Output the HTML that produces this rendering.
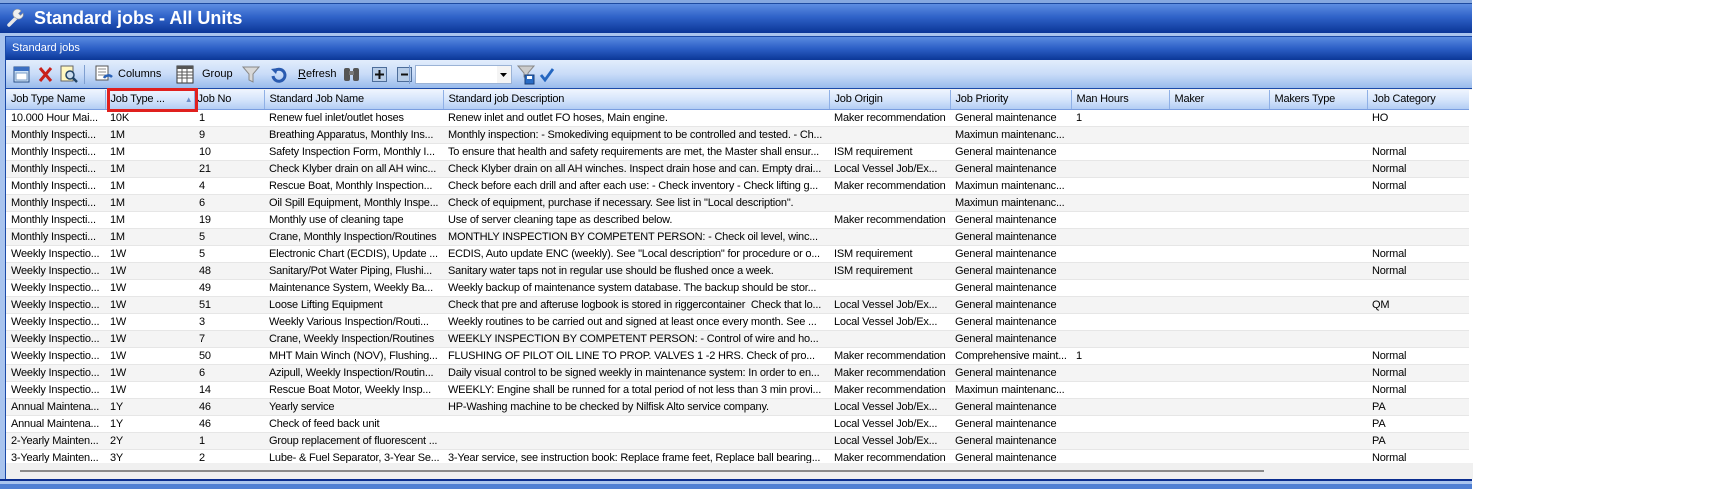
<!DOCTYPE html>
<html><head><meta charset="utf-8"><style>
*{margin:0;padding:0;box-sizing:border-box}
body{width:1720px;height:489px;background:#fff;position:relative;overflow:hidden;font-family:"Liberation Sans",sans-serif}
.a{position:absolute}
#frame{left:0;top:0;width:1472px;height:489px;background:#a9c4ee}
#title{left:0;top:3px;width:1472px;height:30px;background:linear-gradient(#5d8de2,#2f62c8 45%,#0a3596);border-top:1px solid #1d4aa0}
#title span{position:absolute;left:34px;top:4px;color:#fff;font-weight:bold;font-size:18px}
#panel{left:5px;top:36px;width:1467px;height:443px;background:#f0f0f0;border-left:1px solid #1b4aa8;border-top:1px solid #1b4aa8}
#phead{left:0;top:0;width:100%;height:23px;background:linear-gradient(#5a8be0,#2c5fc6 50%,#0b3797)}
#phead span{position:absolute;left:6px;top:5px;color:#fff;font-size:11px}
#tool{left:0;top:23px;width:100%;height:29px;background:linear-gradient(#e2edfc,#c9dcf8 50%,#99bbec);border-bottom:1px solid #1b4aa8}
.tl{position:absolute;top:8px;font-size:11px;color:#000}
#grid{left:0;top:53px;width:1467px;height:373px;background:#fff;overflow:hidden}
table{border-collapse:collapse;table-layout:fixed;width:1463px}
td,th{font-size:11px;white-space:nowrap;overflow:hidden;padding-left:5px;text-align:left;font-weight:normal;height:17px;letter-spacing:-0.2px}
th{height:19px;background:linear-gradient(#eef4fe,#d6e5fb 50%,#b3cdf4);border-bottom:1px solid #7a9ee0;border-left:1px solid #8fb0e6}
th:first-child{border-left:none}
tr:nth-child(odd) td{background:#f4f4f4}
tr:nth-child(even) td{background:#fff}
td{border-bottom:1px solid #e6e6e6}
#hs{left:0;top:426px;width:1467px;height:16px;background:#f0f0f0}
#bot1{left:0;top:479px;width:1472px;height:2px;background:#0a2d8f}
#bot2{left:0;top:481px;width:1472px;height:3px;background:#a9c4ee}
#bot3{left:0;top:484px;width:1472px;height:5px;background:#4f7fd3}
</style></head><body>
<div id="frame" class="a"></div>
<div class="a" style="left:0;top:0;width:1472px;height:3px;background:#86a8e0"></div>
<div id="title" class="a">
<svg class="a" style="left:6px;top:4px" width="20" height="20" viewBox="0 0 20 20"><path d="M3 17 L11 9" stroke="#e8e8e8" stroke-width="3.5" stroke-linecap="round"/><path d="M10 10 A4.5 4.5 0 1 1 15 3 L12.5 5.5 L14.5 7.5 L17 5 A4.5 4.5 0 0 1 10 10" fill="#f0f0f0" stroke="#999" stroke-width="0.6"/></svg>
<span>Standard jobs - All Units</span></div>
<div id="panel" class="a">
<div id="phead" class="a"><span>Standard jobs</span></div>
<div id="tool" class="a">
<svg class="a" style="left:7px;top:6px" width="17" height="17"><rect x="1" y="1" width="15" height="15" fill="#cfe3f7" stroke="#2a4f86"/><rect x="1" y="1" width="15" height="4" fill="#3b6fc2"/><rect x="3" y="7" width="11" height="7" fill="#fff" stroke="#7a9cc8"/></svg>
<svg class="a" style="left:32px;top:6px" width="15" height="17"><path d="M2 2 L13 15 M13 2 L2 15" stroke="#c8201a" stroke-width="3"/></svg>
<svg class="a" style="left:54px;top:5px" width="19" height="18"><rect x="1" y="1" width="12" height="15" fill="#fff7c0" stroke="#666"/><circle cx="10" cy="10" r="4" fill="#cde" stroke="#246" stroke-width="1.5"/><path d="M13 13 L17 17" stroke="#246" stroke-width="2.5"/></svg>
<div class="a" style="left:78px;top:5px;width:1px;height:19px;background:#7f9fd0"></div>
<svg class="a" style="left:89px;top:5px" width="19" height="19"><rect x="1" y="1" width="12" height="14" fill="#fff" stroke="#555"/><path d="M3 4h8M3 7h8M3 10h8" stroke="#888"/><path d="M9 13 A5 5 0 0 1 17 12" stroke="#2a62b8" stroke-width="2.5" fill="none"/></svg>
<span class="tl" style="left:112px">Columns</span>
<svg class="a" style="left:170px;top:5px" width="18" height="19"><rect x="1" y="1" width="16" height="17" fill="#fff" stroke="#333"/><rect x="1" y="1" width="16" height="3" fill="#555"/><path d="M1 7h16M1 10h16M1 13h16M6 4v14M11 4v14" stroke="#555"/></svg>
<span class="tl" style="left:196px">Group</span>
<svg class="a" style="left:236px;top:5px" width="18" height="19"><path d="M1 2 L17 2 L11 9 L11 17 L7 15 L7 9 Z" fill="#d8d8d8" stroke="#888"/></svg>
<svg class="a" style="left:263px;top:6px" width="18" height="17"><path d="M4 10 A6 6 0 1 0 7 4" stroke="#2a5bb0" stroke-width="3" fill="none"/><path d="M2 3 L9 2 L7 8 Z" fill="#2a5bb0"/></svg>
<span class="tl" style="left:292px"><u>R</u>efresh</span>
<svg class="a" style="left:336px;top:6px" width="19" height="17"><rect x="2" y="2" width="6" height="13" rx="2" fill="#555"/><rect x="11" y="2" width="6" height="13" rx="2" fill="#555"/><rect x="7" y="5" width="5" height="4" fill="#777"/></svg>
<svg class="a" style="left:366px;top:7px" width="15" height="15"><rect x="0.5" y="0.5" width="14" height="14" fill="#b8cde8" stroke="#4d6d9a"/><path d="M3 7.5h9M7.5 3v9" stroke="#111" stroke-width="2"/></svg>
<svg class="a" style="left:391px;top:7px" width="15" height="15"><rect x="0.5" y="0.5" width="14" height="14" fill="#b8cde8" stroke="#4d6d9a"/><path d="M4 7.5h7" stroke="#111" stroke-width="2"/></svg>
<svg class="a" style="left:416px;top:5px" width="17" height="19"><rect x="1" y="1" width="10" height="12" fill="#fff8d0" stroke="#555"/><rect x="6" y="6" width="10" height="12" fill="#fff8d0" stroke="#555"/><path d="M8 9h6M8 12h6M8 15h6" stroke="#777"/></svg>
<div class="a" style="left:403px;top:5px;width:1px;height:19px;background:#7f9fd0"></div>
<div class="a" style="left:409px;top:5px;width:97px;height:19px;background:#fff;border:1px solid #9bb3d6"></div>
<div class="a" style="left:491px;top:6px;width:14px;height:17px;background:#f4f4f4"></div>
<svg class="a" style="left:494px;top:13px" width="8" height="5"><path d="M0 0h7L3.5 4z" fill="#000"/></svg>
<svg class="a" style="left:511px;top:4px" width="18" height="21"><path d="M1 2 L17 2 L11 9 L11 15 L7 13 L7 9 Z" fill="#ccc" stroke="#888"/><rect x="8" y="11" width="9" height="9" fill="#2a6cc4" stroke="#1a3f7a"/><rect x="10" y="12" width="5" height="3" fill="#fff"/></svg>
<svg class="a" style="left:533px;top:7px" width="16" height="15"><path d="M2 8 L6 13 L14 2" stroke="#2466c0" stroke-width="2.8" fill="none"/></svg>
</div>
<div id="grid" class="a">
<table>
<colgroup><col style="width:99px"><col style="width:89px"><col style="width:70px"><col style="width:179px"><col style="width:386px"><col style="width:121px"><col style="width:121px"><col style="width:98px"><col style="width:100px"><col style="width:98px"><col style="width:102px"></colgroup>
<thead><tr><th>Job Type Name</th><th>Job Type ...<span style="color:#6f8fc8;font-size:8px;margin-left:20px">▲</span></th><th style="padding-left:3px">Job No</th><th>Standard Job Name</th><th>Standard job Description</th><th>Job Origin</th><th>Job Priority</th><th>Man Hours</th><th>Maker</th><th>Makers Type</th><th>Job Category</th></tr></thead>
<tbody>
<tr style="display:none"><td></td></tr>
<tr><td>10.000 Hour Mai...</td><td>10K</td><td>1</td><td>Renew fuel inlet/outlet hoses</td><td>Renew inlet and outlet FO hoses, Main engine.</td><td>Maker recommendation</td><td>General maintenance</td><td>1</td><td></td><td></td><td>HO</td></tr>
<tr><td>Monthly Inspecti...</td><td>1M</td><td>9</td><td>Breathing Apparatus, Monthly Ins...</td><td>Monthly inspection: - Smokediving equipment to be controlled and tested. - Ch...</td><td></td><td>Maximun maintenanc...</td><td></td><td></td><td></td><td></td></tr>
<tr><td>Monthly Inspecti...</td><td>1M</td><td>10</td><td>Safety Inspection Form, Monthly I...</td><td>To ensure that health and safety requirements are met, the Master shall ensur...</td><td>ISM requirement</td><td>General maintenance</td><td></td><td></td><td></td><td>Normal</td></tr>
<tr><td>Monthly Inspecti...</td><td>1M</td><td>21</td><td>Check Klyber drain on all AH winc...</td><td>Check Klyber drain on all AH winches. Inspect drain hose and can. Empty drai...</td><td>Local Vessel Job/Ex...</td><td>General maintenance</td><td></td><td></td><td></td><td>Normal</td></tr>
<tr><td>Monthly Inspecti...</td><td>1M</td><td>4</td><td>Rescue Boat, Monthly Inspection...</td><td>Check before each drill and after each use: - Check inventory - Check lifting g...</td><td>Maker recommendation</td><td>Maximun maintenanc...</td><td></td><td></td><td></td><td>Normal</td></tr>
<tr><td>Monthly Inspecti...</td><td>1M</td><td>6</td><td>Oil Spill Equipment, Monthly Inspe...</td><td>Check of equipment, purchase if necessary. See list in "Local description".</td><td></td><td>Maximun maintenanc...</td><td></td><td></td><td></td><td></td></tr>
<tr><td>Monthly Inspecti...</td><td>1M</td><td>19</td><td>Monthly use of cleaning tape</td><td>Use of server cleaning tape as described below.</td><td>Maker recommendation</td><td>General maintenance</td><td></td><td></td><td></td><td></td></tr>
<tr><td>Monthly Inspecti...</td><td>1M</td><td>5</td><td>Crane, Monthly Inspection/Routines</td><td>MONTHLY INSPECTION BY COMPETENT PERSON: - Check oil level, winc...</td><td></td><td>General maintenance</td><td></td><td></td><td></td><td></td></tr>
<tr><td>Weekly Inspectio...</td><td>1W</td><td>5</td><td>Electronic Chart (ECDIS), Update ...</td><td>ECDIS, Auto update ENC (weekly). See "Local description" for procedure or o...</td><td>ISM requirement</td><td>General maintenance</td><td></td><td></td><td></td><td>Normal</td></tr>
<tr><td>Weekly Inspectio...</td><td>1W</td><td>48</td><td>Sanitary/Pot Water Piping, Flushi...</td><td>Sanitary water taps not in regular use should be flushed once a week.</td><td>ISM requirement</td><td>General maintenance</td><td></td><td></td><td></td><td>Normal</td></tr>
<tr><td>Weekly Inspectio...</td><td>1W</td><td>49</td><td>Maintenance System, Weekly Ba...</td><td>Weekly backup of maintenance system database. The backup should be stor...</td><td></td><td>General maintenance</td><td></td><td></td><td></td><td></td></tr>
<tr><td>Weekly Inspectio...</td><td>1W</td><td>51</td><td>Loose Lifting Equipment</td><td>Check that pre and afteruse logbook is stored in riggercontainer&nbsp; Check that lo...</td><td>Local Vessel Job/Ex...</td><td>General maintenance</td><td></td><td></td><td></td><td>QM</td></tr>
<tr><td>Weekly Inspectio...</td><td>1W</td><td>3</td><td>Weekly Various Inspection/Routi...</td><td>Weekly routines to be carried out and signed at least once every month. See ...</td><td>Local Vessel Job/Ex...</td><td>General maintenance</td><td></td><td></td><td></td><td></td></tr>
<tr><td>Weekly Inspectio...</td><td>1W</td><td>7</td><td>Crane, Weekly Inspection/Routines</td><td>WEEKLY INSPECTION BY COMPETENT PERSON: - Control of wire and ho...</td><td></td><td>General maintenance</td><td></td><td></td><td></td><td></td></tr>
<tr><td>Weekly Inspectio...</td><td>1W</td><td>50</td><td>MHT Main Winch (NOV), Flushing...</td><td>FLUSHING OF PILOT OIL LINE TO PROP. VALVES 1 -2 HRS. Check of pro...</td><td>Maker recommendation</td><td>Comprehensive maint...</td><td>1</td><td></td><td></td><td>Normal</td></tr>
<tr><td>Weekly Inspectio...</td><td>1W</td><td>6</td><td>Azipull, Weekly Inspection/Routin...</td><td>Daily visual control to be signed weekly in maintenance system: In order to en...</td><td>Maker recommendation</td><td>General maintenance</td><td></td><td></td><td></td><td>Normal</td></tr>
<tr><td>Weekly Inspectio...</td><td>1W</td><td>14</td><td>Rescue Boat Motor, Weekly Insp...</td><td>WEEKLY: Engine shall be runned for a total period of not less than 3 min provi...</td><td>Maker recommendation</td><td>Maximun maintenanc...</td><td></td><td></td><td></td><td>Normal</td></tr>
<tr><td>Annual Maintena...</td><td>1Y</td><td>46</td><td>Yearly service</td><td>HP-Washing machine to be checked by Nilfisk Alto service company.</td><td>Local Vessel Job/Ex...</td><td>General maintenance</td><td></td><td></td><td></td><td>PA</td></tr>
<tr><td>Annual Maintena...</td><td>1Y</td><td>46</td><td>Check of feed back unit</td><td></td><td>Local Vessel Job/Ex...</td><td>General maintenance</td><td></td><td></td><td></td><td>PA</td></tr>
<tr><td>2-Yearly Mainten...</td><td>2Y</td><td>1</td><td>Group replacement of fluorescent ...</td><td></td><td>Local Vessel Job/Ex...</td><td>General maintenance</td><td></td><td></td><td></td><td>PA</td></tr>
<tr><td>3-Yearly Mainten...</td><td>3Y</td><td>2</td><td>Lube- &amp; Fuel Separator, 3-Year Se...</td><td>3-Year service, see instruction book: Replace frame feet, Replace ball bearing...</td><td>Maker recommendation</td><td>General maintenance</td><td></td><td></td><td></td><td>Normal</td></tr>
</tbody></table>
</div>
<div id="hs" class="a"><div class="a" style="left:14px;top:7px;width:1244px;height:2px;background:#8a8a8a"></div></div>
<div class="a" style="left:101px;top:51px;width:91px;height:24px;border:3px solid #e0201e"></div>
</div>
<div id="bot1" class="a"></div><div id="bot2" class="a"></div><div id="bot3" class="a"></div>
</body></html>
